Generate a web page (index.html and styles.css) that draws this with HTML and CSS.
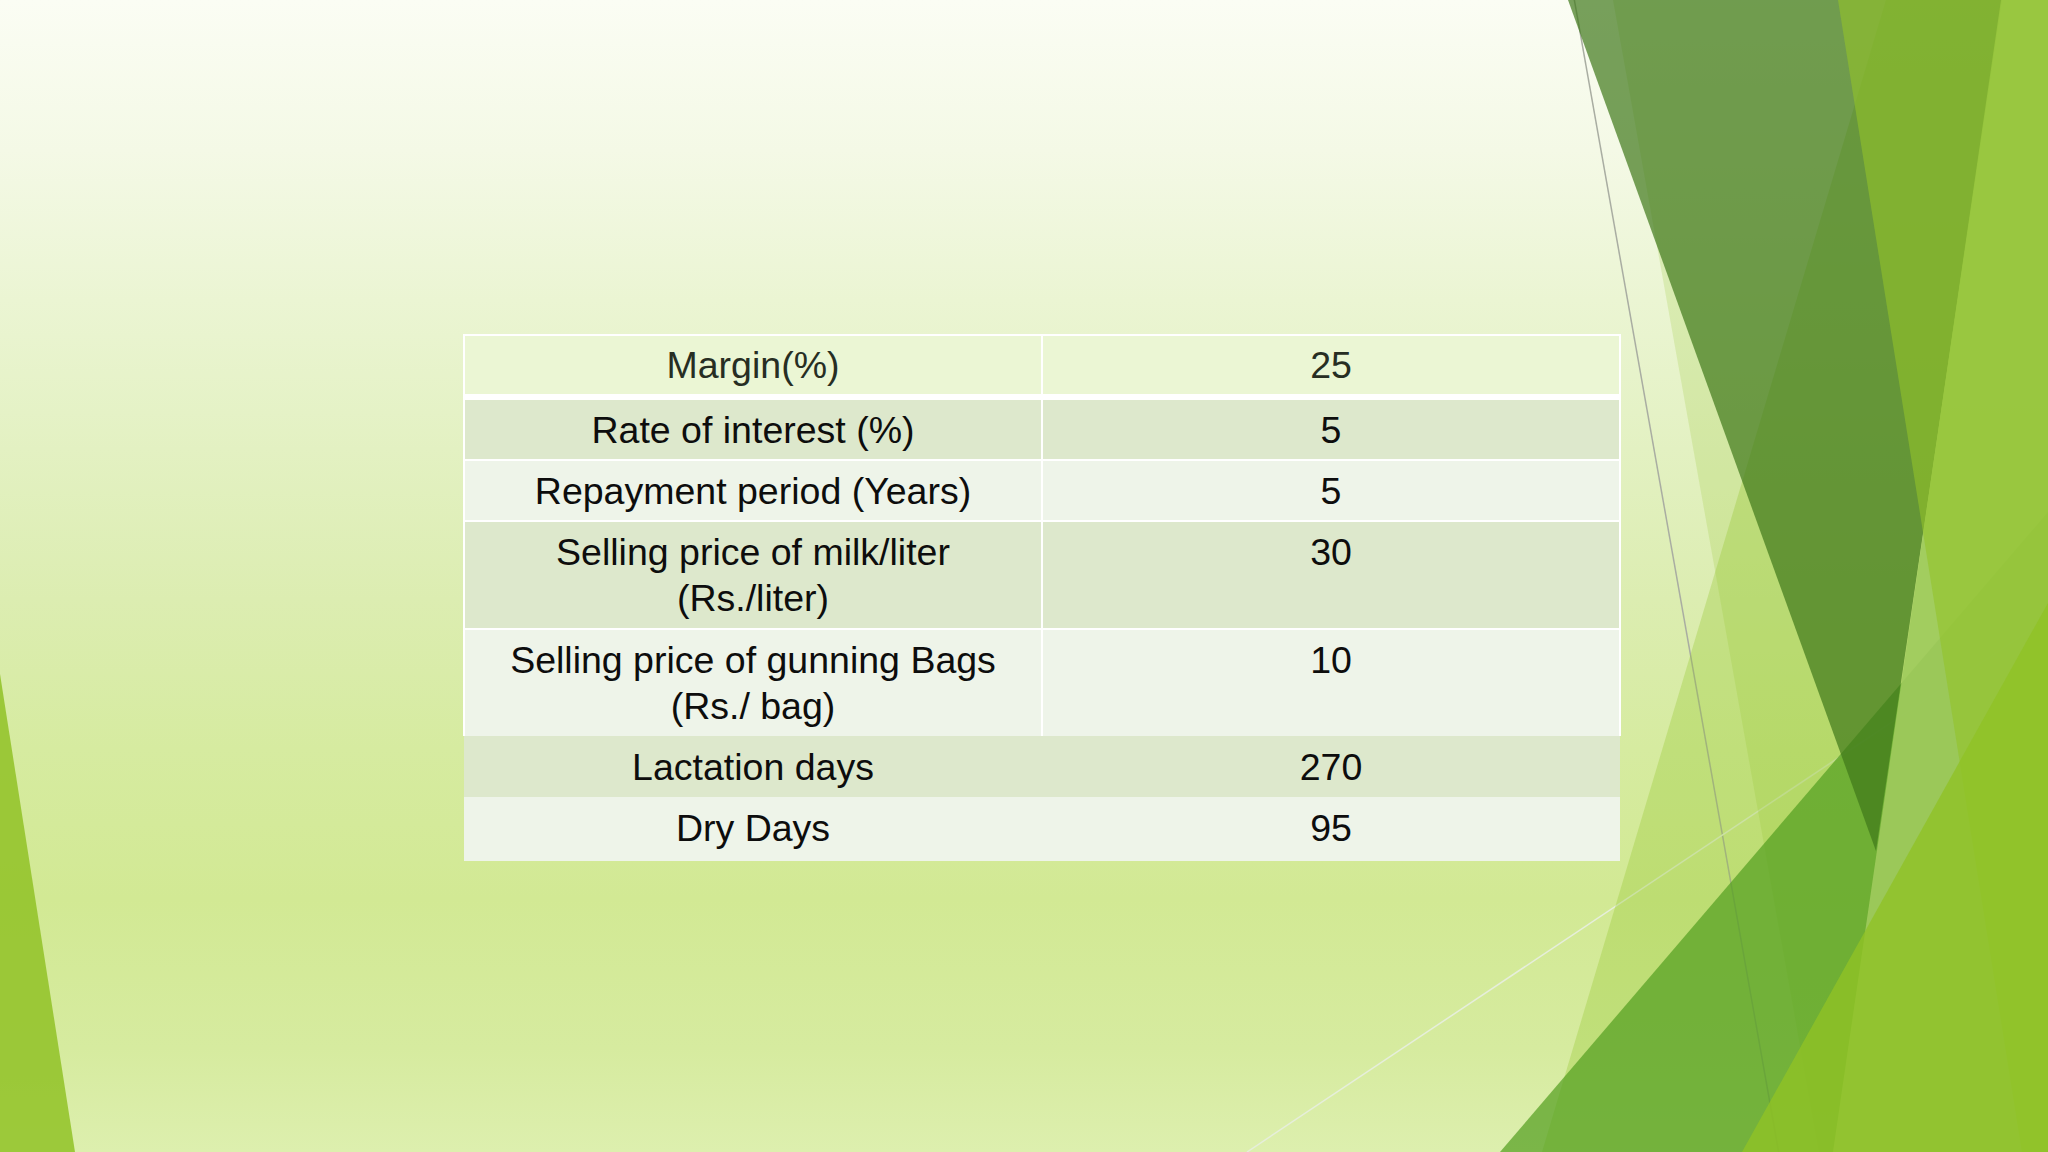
FILE: index.html
```html
<!DOCTYPE html>
<html lang="en">
<head>
<meta charset="utf-8">
<title>Dairy project assumptions</title>
<link rel="stylesheet" href="styles.css">
</head>
<body>
<div class="slide">
  <svg class="deco" viewBox="0 0 2048 1152" width="2048" height="1152" aria-hidden="true">
    <line class="ln1" x1="1574" y1="-2" x2="1779" y2="1154"/>
    <line class="ln2" x1="1247" y1="1152" x2="2048" y2="618"/>
    <polygon class="r23" points="1886,0 2048,0 2048,1152 1542,1152"/>
    <polygon class="r25" points="1613,0 2048,0 2048,1152 1819,1152"/>
    <polygon class="t26" points="1500,1152 2048,512 2048,1152"/>
    <polygon class="r27" points="1568,0 2002,0 1876,851"/>
    <polygon class="r29" points="2001,0 2048,0 2048,1152 1833,1152"/>
    <polygon class="r28" points="1838,0 2048,0 2048,1152 2022,1152"/>
    <polygon class="t30" points="1742,1152 2048,603 2048,1152"/>
    <polygon class="t31" points="0,674 75,1152 0,1152"/>
  </svg>

  <table class="data">
    <tr class="head">
      <td>Margin(%)</td>
      <td>25</td>
    </tr>
    <tr class="band1 ruled r2">
      <td>Rate of interest (%)</td>
      <td>5</td>
    </tr>
    <tr class="band2 ruled r3">
      <td>Repayment period (Years)</td>
      <td>5</td>
    </tr>
    <tr class="band1 ruled r4">
      <td>Selling price of milk/liter<br>(Rs./liter)</td>
      <td>30</td>
    </tr>
    <tr class="band2 ruled r5">
      <td>Selling price of gunning Bags<br>(Rs./ bag)</td>
      <td>10</td>
    </tr>
    <tr class="band1 plain r6">
      <td>Lactation days</td>
      <td>270</td>
    </tr>
    <tr class="band2 plain r7">
      <td>Dry Days</td>
      <td>95</td>
    </tr>
  </table>
</div>
</body>
</html>
```

FILE: styles.css
```css
html, body {
  margin: 0;
  padding: 0;
}

body {
  width: 2048px;
  height: 1152px;
  overflow: hidden;
  font-family: "Liberation Sans", Arial, sans-serif;
}

.slide {
  position: relative;
  width: 2048px;
  height: 1152px;
  box-sizing: border-box;
  padding: 334px 0 0 463px;
  overflow: hidden;
  background: linear-gradient(180deg,
    #fbfdf4 0%,
    #f4f9e6 13%,
    #ebf5d3 26%,
    #e3f1c2 39%,
    #dcedb1 52%,
    #d6eba0 65%,
    #d2e994 78%,
    #d6eb9f 91%,
    #ddefae 100%);
}

.deco {
  position: absolute;
  left: 0;
  top: 0;
  width: 2048px;
  height: 1152px;
}

.ln1 {
  stroke: #a9ada2;
  stroke-width: 1.5;
}

.ln2 {
  stroke: #e6eedb;
  stroke-width: 1.5;
}

.r23 { fill: #90c226; fill-opacity: 0.30; }
.r25 { fill: #90c226; fill-opacity: 0.20; }
.t26 { fill: #54a021; fill-opacity: 0.72; }
.r27 { fill: #3f7819; fill-opacity: 0.70; }
.r29 { fill: #a0cb5d; fill-opacity: 0.90; }
.r28 { fill: #92c32a; fill-opacity: 0.60; }
.t30 { fill: #90c226; fill-opacity: 0.80; }
.t31 { fill: #90c226; fill-opacity: 0.85; }

.data {
  position: relative;
  width: 1158px;
  table-layout: fixed;
  border-collapse: collapse;
  font-size: 37.5px;
  line-height: 46px;
  color: #0d0d0d;
}

.data td {
  width: 50%;
  padding: 7px 15px 6px;
  text-align: center;
  vertical-align: top;
}

.data .head td {
  background: #ebf6d4;
  color: #272e23;
  border: 2px solid #ffffff;
  border-bottom: 6px solid #ffffff;
  padding: 6px 15px 6px;
}

.data .band1 td {
  background: #dde8cc;
}

.data .band2 td {
  background: #eef4e9;
}

.data .ruled td {
  border: 2px solid #ffffff;
}

.data .r4 td,
.data .r5 td {
  padding: 7px 15px 7px;
}

.data .r5 td {
  border-bottom-style: hidden;
}

.data .r6 td {
  padding: 8px 15px 7px;
}

.data .r7 td {
  padding: 8px 15px 10px;
}
```
